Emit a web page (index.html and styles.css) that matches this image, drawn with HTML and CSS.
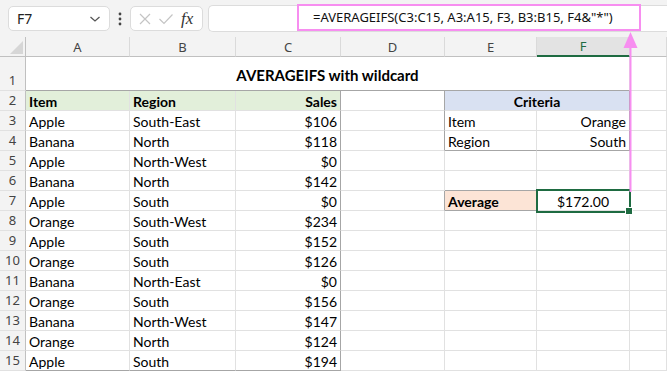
FILE: index.html
```html
<!DOCTYPE html>
<html lang="en">

<head>
    <meta charset="UTF-8">
    <meta name="viewport" content="width=device-width, initial-scale=1.0">
    <title>AVERAGEIFS with wildcard</title>
    <link rel="stylesheet" href="styles.css">
</head>

<body>
    <div class="page">
        <!-- Formula bar -->
        <div class="toolbar">
            <div class="name-box">
                <span>F7</span>
                <svg class="chevron" width="12" height="8" viewBox="0 0 12 8"><path d="M1.5 2 L6 6 L10.5 2" fill="none" stroke="#555" stroke-width="1.3"/></svg>
            </div>
            <div class="dots">
                <svg width="4" height="14" viewBox="0 0 4 14"><circle cx="2" cy="2" r="1.4" fill="#444"/><circle cx="2" cy="7" r="1.4" fill="#444"/><circle cx="2" cy="12" r="1.4" fill="#444"/></svg>
            </div>
            <div class="fx-box">
                <svg width="14" height="14" viewBox="0 0 14 14"><path d="M2 2 L12 12 M12 2 L2 12" stroke="#c4c4c4" stroke-width="1.2"/></svg>
                <svg width="16" height="14" viewBox="0 0 16 14"><path d="M1.5 7 L6 11.5 L14.5 2.5" fill="none" stroke="#c4c4c4" stroke-width="1.2"/></svg>
                <span class="fx">fx</span>
            </div>
            <div class="formula-input">
                <div class="formula-mark">=AVERAGEIFS(C3:C15, A3:A15, F3, B3:B15, F4&amp;"*")</div>
            </div>
        </div>

        <!-- Worksheet -->
        <div class="sheet">
            <div class="corner"><span class="select-all"></span></div>
            <div class="ch">A</div>
            <div class="ch">B</div>
            <div class="ch">C</div>
            <div class="ch">D</div>
            <div class="ch">E</div>
            <div class="ch active">F</div>
            <div class="ch"></div>

            <div class="rh tall">1</div>
            <div class="c title gb">AVERAGEIFS with wildcard</div>
            <div class="c"></div>

            <div class="rh">2</div>
            <div class="c b green">Item</div>
            <div class="c b green">Region</div>
            <div class="c b green r gr">Sales</div>
            <div class="c gr"></div>
            <div class="c b blue crit gr">Criteria</div>
            <div class="c"></div>

            <div class="rh">3</div>
            <div class="c">Apple</div>
            <div class="c">South-East</div>
            <div class="c r gr">$106</div>
            <div class="c gr"></div>
            <div class="c">Item</div>
            <div class="c r gr">Orange</div>
            <div class="c"></div>

            <div class="rh">4</div>
            <div class="c">Banana</div>
            <div class="c">North</div>
            <div class="c r gr">$118</div>
            <div class="c gr"></div>
            <div class="c gb">Region</div>
            <div class="c r gr gb">South</div>
            <div class="c"></div>

            <div class="rh">5</div>
            <div class="c">Apple</div>
            <div class="c">North-West</div>
            <div class="c r gr">$0</div>
            <div class="c"></div>
            <div class="c"></div>
            <div class="c"></div>
            <div class="c"></div>

            <div class="rh">6</div>
            <div class="c">Banana</div>
            <div class="c">North</div>
            <div class="c r gr">$142</div>
            <div class="c"></div>
            <div class="c gb"></div>
            <div class="c"></div>
            <div class="c"></div>

            <div class="rh">7</div>
            <div class="c">Apple</div>
            <div class="c">South</div>
            <div class="c r gr">$0</div>
            <div class="c gr"></div>
            <div class="c b peach gb">Average</div>
            <div class="c mid">$172.00</div>
            <div class="c"></div>

            <div class="rh">8</div>
            <div class="c">Orange</div>
            <div class="c">South-West</div>
            <div class="c r gr">$234</div>
            <div class="c"></div>
            <div class="c"></div>
            <div class="c"></div>
            <div class="c"></div>

            <div class="rh">9</div>
            <div class="c">Apple</div>
            <div class="c">South</div>
            <div class="c r gr">$152</div>
            <div class="c"></div>
            <div class="c"></div>
            <div class="c"></div>
            <div class="c"></div>

            <div class="rh">10</div>
            <div class="c">Orange</div>
            <div class="c">South</div>
            <div class="c r gr">$126</div>
            <div class="c"></div>
            <div class="c"></div>
            <div class="c"></div>
            <div class="c"></div>

            <div class="rh">11</div>
            <div class="c">Banana</div>
            <div class="c">North-East</div>
            <div class="c r gr">$0</div>
            <div class="c"></div>
            <div class="c"></div>
            <div class="c"></div>
            <div class="c"></div>

            <div class="rh">12</div>
            <div class="c">Orange</div>
            <div class="c">South</div>
            <div class="c r gr">$156</div>
            <div class="c"></div>
            <div class="c"></div>
            <div class="c"></div>
            <div class="c"></div>

            <div class="rh">13</div>
            <div class="c">Banana</div>
            <div class="c">North-West</div>
            <div class="c r gr">$147</div>
            <div class="c"></div>
            <div class="c"></div>
            <div class="c"></div>
            <div class="c"></div>

            <div class="rh">14</div>
            <div class="c">Orange</div>
            <div class="c">North</div>
            <div class="c r gr">$124</div>
            <div class="c"></div>
            <div class="c"></div>
            <div class="c"></div>
            <div class="c"></div>

            <div class="rh">15</div>
            <div class="c gb">Apple</div>
            <div class="c gb">South</div>
            <div class="c r gr gb">$194</div>
            <div class="c"></div>
            <div class="c"></div>
            <div class="c"></div>
            <div class="c"></div>
        </div>

        <!-- Active cell F7 -->
        <div class="selection"><span class="handle"></span></div>

        <!-- Callout arrow from F7 to the formula -->
        <svg class="arrow" width="20" height="165" viewBox="0 0 20 165">
            <line x1="10.5" y1="14" x2="10.5" y2="162" stroke="#f78ef0" stroke-width="2"/>
            <polygon points="10.5,2 3.5,18 17.5,18" fill="#f78ef0"/>
        </svg>
    </div>
</body>

</html>
```

FILE: styles.css
```css
body {
    margin: 0;
    background-color: white;
    font-family: "Lato", "Liberation Sans", sans-serif;
}

.page {
    position: relative;
    width: 667px;
    height: 372px;
    overflow: hidden;
}

/* Formula bar */
.toolbar {
    display: flex;
    align-items: center;
    height: 37px;
    padding-left: 8px;
    background-color: #f3f3f3;
    box-sizing: border-box;
    font-family: "Noto Sans", "Open Sans", sans-serif;
    color: #222;
}

.name-box {
    display: flex;
    align-items: center;
    justify-content: space-between;
    width: 102px;
    height: 25px;
    padding: 0 8px;
    box-sizing: border-box;
    background-color: white;
    border: 1px solid #dcdcdc;
    border-radius: 5px;
    font-size: 14px;
}

.dots {
    display: flex;
    justify-content: center;
    width: 20px;
}

.fx-box {
    display: flex;
    align-items: center;
    gap: 6px;
    width: 73px;
    height: 25px;
    padding-left: 7px;
    box-sizing: border-box;
    background-color: white;
    border: 1px solid #dcdcdc;
    border-radius: 5px;
}

.fx {
    font-family: "Liberation Serif", serif;
    font-style: italic;
    font-size: 17px;
    color: #333;
    margin-left: 1px;
}

.formula-input {
    flex: 1;
    height: 25px;
    margin-left: 5px;
    background-color: white;
    border: 1px solid #dcdcdc;
    border-right: none;
    border-radius: 5px 0 0 5px;
    position: relative;
}

.formula-mark {
    position: absolute;
    left: 88px;
    top: -2px;
    width: 344px;
    height: 27px;
    box-sizing: border-box;
    border: 2px solid #f78ef0;
    padding-left: 14px;
    font-size: 13px;
    line-height: 23px;
    color: #111;
}

/* Worksheet grid */
.sheet {
    display: grid;
    grid-template-columns: 26px 104px 106px 105px 104px 92px 93px 37px;
    grid-template-rows: 20px 34px repeat(14, 20px);
    font-size: 14px;
    color: #000;
}

.corner {
    position: relative;
    background-color: #f3f3f3;
    border-right: 1px solid #c0c0c0;
    border-bottom: 1px solid #c0c0c0;
}

.select-all {
    position: absolute;
    right: 2px;
    bottom: 2px;
    width: 0;
    height: 0;
    border-left: 13px solid transparent;
    border-bottom: 13px solid #d6d6d6;
}

.ch {
    display: flex;
    align-items: center;
    justify-content: center;
    background-color: #f3f3f3;
    border-right: 1px solid #dadada;
    border-bottom: 1px solid #c0c0c0;
    font-family: "Noto Sans", "Open Sans", sans-serif;
    font-size: 13px;
    color: #444;
}

.ch.active {
    background-color: #e3e3e3;
    color: #1e6b41;
    border-bottom: 2px solid #1e6b41;
}

.rh {
    display: flex;
    align-items: flex-end;
    justify-content: center;
    padding-bottom: 1px;
    background-color: #f3f3f3;
    border-right: 1px solid #c0c0c0;
    border-bottom: 1px solid #e1e1e1;
    font-family: "Noto Sans", "Open Sans", sans-serif;
    font-size: 13px;
    color: #444;
    box-sizing: border-box;
}

.c {
    display: flex;
    align-items: flex-end;
    padding: 0 3px 0 3px;
    border-right: 1px solid #e1e1e1;
    border-bottom: 1px solid #e1e1e1;
    box-sizing: border-box;
    white-space: nowrap;
    overflow: hidden;
}

.c.r {
    justify-content: flex-end;
}

.c.mid {
    justify-content: center;
}

.c.b {
    font-weight: bold;
}

.c.gr {
    border-right-color: #a6a6a6;
}

.c.gb {
    border-bottom-color: #a6a6a6;
}

.title {
    grid-column: span 6;
    justify-content: center;
    font-size: 15px;
    font-weight: bold;
    padding-bottom: 6px;
}

.green {
    background-color: #e2efda;
}

.blue {
    background-color: #d9e1f2;
}

.crit {
    grid-column: span 2;
    justify-content: center;
}

.peach {
    background-color: #fce4d6;
}

/* Active cell outline */
.selection {
    position: absolute;
    left: 536px;
    top: 189px;
    width: 95px;
    height: 24px;
    box-sizing: border-box;
    border: 2px solid #1e6b41;
}

.handle {
    position: absolute;
    right: -4px;
    bottom: -4px;
    width: 6px;
    height: 6px;
    background-color: #1e6b41;
    border: 1px solid white;
}

.arrow {
    position: absolute;
    left: 620px;
    top: 30px;
}
```
